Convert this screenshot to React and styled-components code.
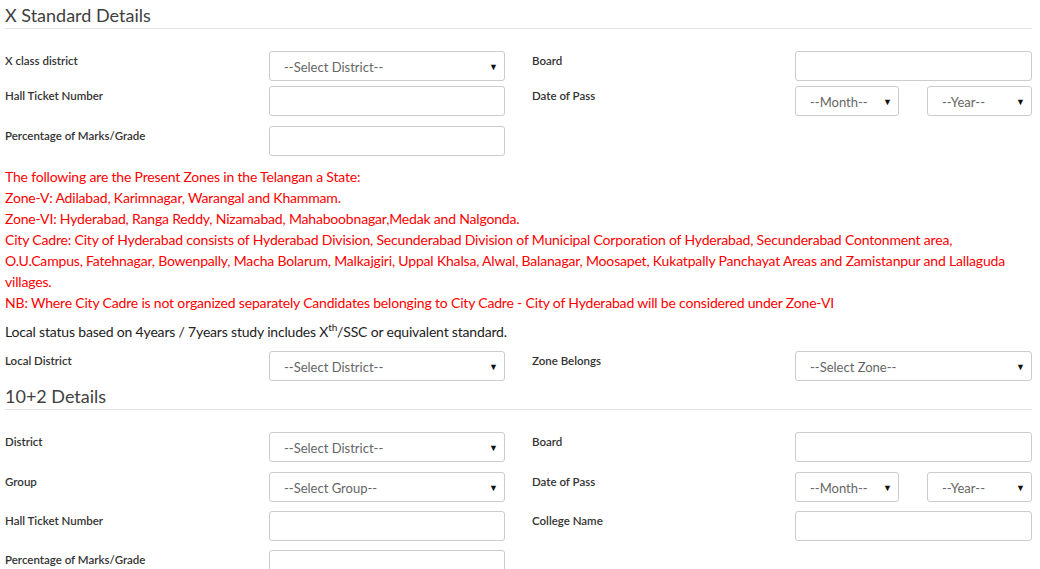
import React from "react";
import styled, { createGlobalStyle } from "styled-components";

const GlobalStyle = createGlobalStyle`
  body {
    margin: 0;
    background: #fff;
    font-family: Lato, "Open Sans", sans-serif;
    color: #333;
  }
`;

const Page = styled.div`
  padding: 0 8px 0 5px;
`;

const SectionTitle = styled.h3`
  margin: 0;
  padding-top: 5px;
  padding-bottom: 3px;
  font-size: 18px;
  font-weight: 400;
  line-height: 20px;
  color: #3f3f3f;
  border-bottom: 1px solid #e3e3e3;
  margin-bottom: ${(p) => p.$after}px;
`;

const Row = styled.div`
  display: flex;
  gap: 27px;
  margin-bottom: ${(p) => p.$gap || 0}px;
`;

const Half = styled.div`
  width: 500px;
  display: grid;
  grid-template-columns: ${(p) => (p.$right ? "263px" : "264px")} 1fr;
  align-items: start;
`;

const Label = styled.label`
  font-size: 11.5px;
  font-weight: 600;
  color: #333;
  padding-top: 2px;
  line-height: 16px;
`;

const TextInput = styled.input`
  box-sizing: border-box;
  height: 30px;
  width: 100%;
  border: 1px solid #ccc;
  border-radius: 3px;
  padding: 0 12px;
  font: inherit;
  outline: none;
`;

const SelectBox = styled.div`
  box-sizing: border-box;
  height: 30px;
  width: ${(p) => (p.$w ? `${p.$w}px` : "100%")};
  border: 1px solid #ccc;
  border-radius: 3px;
  display: flex;
  align-items: center;
  padding: 0 6px 0 14px;
  background: #fff;
`;

const SelectText = styled.span`
  flex: 1;
  font-size: 13px;
  color: #666;
  padding-top: 1px;
`;

const Arrow = styled.span`
  font-size: 9px;
  color: #111;
`;

const DatePair = styled.div`
  display: flex;
  gap: 28px;
`;

const Notes = styled.div`
  margin-top: 10px;
  color: #f00;
  font-size: 14px;
  line-height: 21px;
  letter-spacing: -0.18px;
`;

const NoteLine = styled.div``;

const LocalStatus = styled.p`
  margin: 8px 0 9px;
  font-size: 14px;
  line-height: 21px;
  letter-spacing: -0.18px;
  color: #222;
  sup {
    font-size: 10px;
    line-height: 0;
  }
`;

const Select = ({ children, w }) => (
  <SelectBox $w={w}>
    <SelectText>{children}</SelectText>
    <Arrow>▼</Arrow>
  </SelectBox>
);

const DateOfPass = () => (
  <DatePair>
    <Select w={104}>--Month--</Select>
    <Select w={105}>--Year--</Select>
  </DatePair>
);

const App = () => (
  <Page>
    <GlobalStyle />
    <SectionTitle $after={22}>X Standard Details</SectionTitle>
    <Row $gap={5}>
      <Half>
        <Label>X class district</Label>
        <Select>--Select District--</Select>
      </Half>
      <Half $right>
        <Label>Board</Label>
        <TextInput />
      </Half>
    </Row>
    <Row $gap={10}>
      <Half>
        <Label>Hall Ticket Number</Label>
        <TextInput />
      </Half>
      <Half $right>
        <Label>Date of Pass</Label>
        <DateOfPass />
      </Half>
    </Row>
    <Row>
      <Half>
        <Label>Percentage of Marks/Grade</Label>
        <TextInput />
      </Half>
    </Row>
    <Notes>
      <NoteLine>The following are the Present Zones in the Telangan a State:</NoteLine>
      <NoteLine>Zone-V: Adilabad, Karimnagar, Warangal and Khammam.</NoteLine>
      <NoteLine>
        Zone-VI: Hyderabad, Ranga Reddy, Nizamabad, Mahaboobnagar,Medak and Nalgonda.
      </NoteLine>
      <NoteLine>
        City Cadre: City of Hyderabad consists of Hyderabad Division, Secunderabad Division of
        Municipal Corporation of Hyderabad, Secunderabad Contonment area, O.U.Campus,
        Fatehnagar, Bowenpally, Macha Bolarum, Malkajgiri, Uppal Khalsa, Alwal, Balanagar,
        Moosapet, Kukatpally Panchayat Areas and Zamistanpur and Lallaguda villages.
      </NoteLine>
      <NoteLine>
        NB: Where City Cadre is not organized separately Candidates belonging to City Cadre -
        City of Hyderabad will be considered under Zone-VI
      </NoteLine>
    </Notes>
    <LocalStatus>
      Local status based on 4years / 7years study includes X<sup>th</sup>/SSC or equivalent
      standard.
    </LocalStatus>
    <Row>
      <Half>
        <Label>Local District</Label>
        <Select>--Select District--</Select>
      </Half>
      <Half $right>
        <Label>Zone Belongs</Label>
        <Select>--Select Zone--</Select>
      </Half>
    </Row>
    <SectionTitle $after={22}>10+2 Details</SectionTitle>
    <Row $gap={10}>
      <Half>
        <Label>District</Label>
        <Select>--Select District--</Select>
      </Half>
      <Half $right>
        <Label>Board</Label>
        <TextInput />
      </Half>
    </Row>
    <Row $gap={9}>
      <Half>
        <Label>Group</Label>
        <Select>--Select Group--</Select>
      </Half>
      <Half $right>
        <Label>Date of Pass</Label>
        <DateOfPass />
      </Half>
    </Row>
    <Row $gap={9}>
      <Half>
        <Label>Hall Ticket Number</Label>
        <TextInput />
      </Half>
      <Half $right>
        <Label>College Name</Label>
        <TextInput />
      </Half>
    </Row>
    <Row $gap={9}>
      <Half>
        <Label>Percentage of Marks/Grade</Label>
        <TextInput />
      </Half>
    </Row>
  </Page>
);

export default App;
